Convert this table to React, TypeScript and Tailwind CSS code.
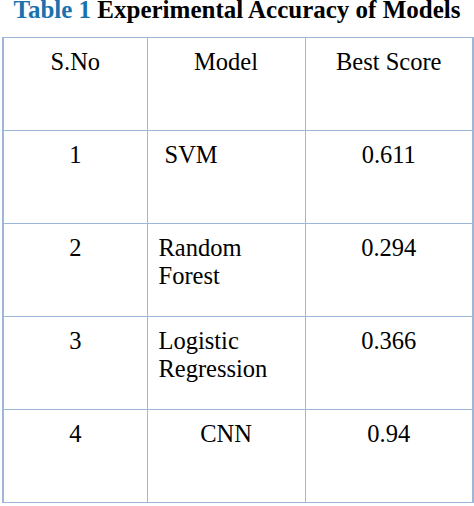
const rows = [
  { no: "1", model: "SVM", score: "0.611", align: "pl-[17px] text-left" },
  { no: "2", model: "Random Forest", score: "0.294", align: "pl-[11px] pr-[40px] text-left" },
  { no: "3", model: "Logistic Regression", score: "0.366", align: "pl-[11px] pr-[20px] text-left" },
  { no: "4", model: "CNN", score: "0.94", align: "text-center" },
];

export default function App() {
  return (
    <div className="w-[474px] h-[506px] bg-white text-black font-['Liberation_Serif','Times_New_Roman',serif]">
      <h1 className="text-center text-[25px] leading-[20px] font-bold">
        <span className="text-[#1a72ad]">Table 1</span> Experimental Accuracy of Models
      </h1>
      <table className="mt-[17px] ml-[2px] w-[470px] table-fixed border-collapse text-[24.5px] leading-[28px]">
        <colgroup>
          <col className="w-[144px]" />
          <col className="w-[158px]" />
          <col className="w-[168px]" />
        </colgroup>
        <thead>
          <tr className="h-[93px]">
            <th className="border border-[#9db7da] border-l-2 align-top pt-[10px] font-normal text-center">S.No</th>
            <th className="border border-[#9db7da] align-top pt-[10px] font-normal text-center">Model</th>
            <th className="border border-[#9db7da] border-r-2 align-top pt-[10px] font-normal text-center">Best Score</th>
          </tr>
        </thead>
        <tbody>
          {rows.map((r) => (
            <tr key={r.no} className="h-[93px]">
              <td className="border border-[#9db7da] border-l-2 align-top pt-[10px] text-center">{r.no}</td>
              <td className={`border border-[#9db7da] align-top pt-[10px] ${r.align}`}>{r.model}</td>
              <td className="border border-[#9db7da] border-r-2 align-top pt-[10px] text-center">{r.score}</td>
            </tr>
          ))}
        </tbody>
      </table>
    </div>
  );
}
